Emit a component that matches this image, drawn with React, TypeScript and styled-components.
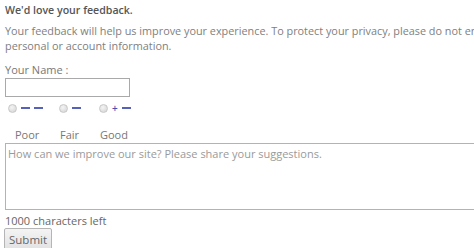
import React, { useState } from 'react';
import styled, { createGlobalStyle } from 'styled-components';

const GlobalStyle = createGlobalStyle`
  html, body {
    margin: 0;
    padding: 0;
    background: #fff;
    overflow: hidden;
  }
  body {
    font-family: "Open Sans", "Liberation Sans", sans-serif;
  }
`;

const Page = styled.div`
  width: 515px;
  padding: 2px 5px 0;
  color: #777;
  font-size: 11px;
`;

const Title = styled.h3`
  margin: 0;
  font-size: 10.6px;
  font-weight: 600;
  color: #555;
  line-height: 16px;
`;

const Intro = styled.p`
  margin: 5px 0 9px;
  font-size: 10.85px;
  line-height: 15px;
  color: #808080;
`;

const FieldLabel = styled.label`
  display: block;
  line-height: 15px;
  color: #777;
`;

const NameInput = styled.input`
  display: block;
  box-sizing: border-box;
  width: 125px;
  height: 19px;
  margin: 1px 0 0;
  border: 1px solid #a9a9a9;
  background: #fff;
  padding: 0 3px;
  font: inherit;
`;

const RatingRow = styled.div`
  display: flex;
  align-items: center;
  height: 22px;
  padding-left: 3px;
`;

const RatingOption = styled.label<{ $width: number }>`
  display: flex;
  align-items: center;
  width: ${p => p.$width}px;
  gap: 4px;
`;

const Radio = styled.span`
  box-sizing: border-box;
  width: 9px;
  height: 9px;
  border-radius: 50%;
  border: 1px solid #c8c8c8;
  background: radial-gradient(circle at 40% 35%, #f4f4f4, #d2d2d2);
`;

const Dashes = styled.span`
  display: flex;
  align-items: center;
  gap: 4px;
  color: #4652b0;
  font-size: 10px;
  font-weight: 600;
`;

const Dash = styled.span`
  width: 9px;
  height: 2px;
  background: #5662ba;
`;

const ScaleRow = styled.div`
  display: flex;
  margin-top: 8px;
  padding-left: 10px;
  line-height: 15px;
  color: #777;
`;

const ScaleLabel = styled.span<{ $width: number }>`
  width: ${p => p.$width}px;
`;

const Suggestions = styled.textarea`
  display: block;
  box-sizing: border-box;
  width: 100%;
  height: 67px;
  margin: 1px 0 0;
  padding: 3px 2px;
  border: 1px solid #b3b3b3;
  resize: none;
  font: inherit;
  color: #555;
  line-height: 14px;
  &::placeholder {
    color: #9a9a9a;
  }
`;

const Counter = styled.div`
  margin-top: 3px;
  line-height: 15px;
  color: #666;
`;

const SubmitButton = styled.button`
  margin: 0 0 0 -1px;
  height: 22px;
  padding: 0 4px;
  border: 1px solid #b5b5b5;
  border-radius: 2px;
  background: linear-gradient(#f4f4f4, #e2e2e2);
  color: #666;
  font: inherit;
  font-size: 11.5px;
`;

const ratings = [
  { width: 51, dashes: 2, plus: false },
  { width: 40, dashes: 1, plus: false },
  { width: 40, dashes: 1, plus: true },
];

export default function App() {
  const [text, setText] = useState('');

  return (
    <>
      <GlobalStyle />
      <Page>
        <Title>We'd love your feedback.</Title>
        <Intro>
          Your feedback will help us improve your experience. To protect your privacy, please do not enter
          personal or account information.
        </Intro>
        <FieldLabel>Your Name :</FieldLabel>
        <NameInput type="text" />
        <RatingRow>
          {ratings.map((r, i) => (
            <RatingOption key={i} $width={r.width}>
              <Radio />
              <Dashes>
                {r.plus && <span>+</span>}
                {Array.from({ length: r.dashes }).map((_, j) => (
                  <Dash key={j} />
                ))}
              </Dashes>
            </RatingOption>
          ))}
        </RatingRow>
        <ScaleRow>
          <ScaleLabel $width={45}>Poor</ScaleLabel>
          <ScaleLabel $width={40}>Fair</ScaleLabel>
          <ScaleLabel $width={40}>Good</ScaleLabel>
        </ScaleRow>
        <Suggestions
          value={text}
          onChange={e => setText(e.target.value)}
          maxLength={1000}
          placeholder="How can we improve our site? Please share your suggestions."
        />
        <Counter>{1000 - text.length} characters left</Counter>
        <SubmitButton type="button">Submit</SubmitButton>
      </Page>
    </>
  );
}
